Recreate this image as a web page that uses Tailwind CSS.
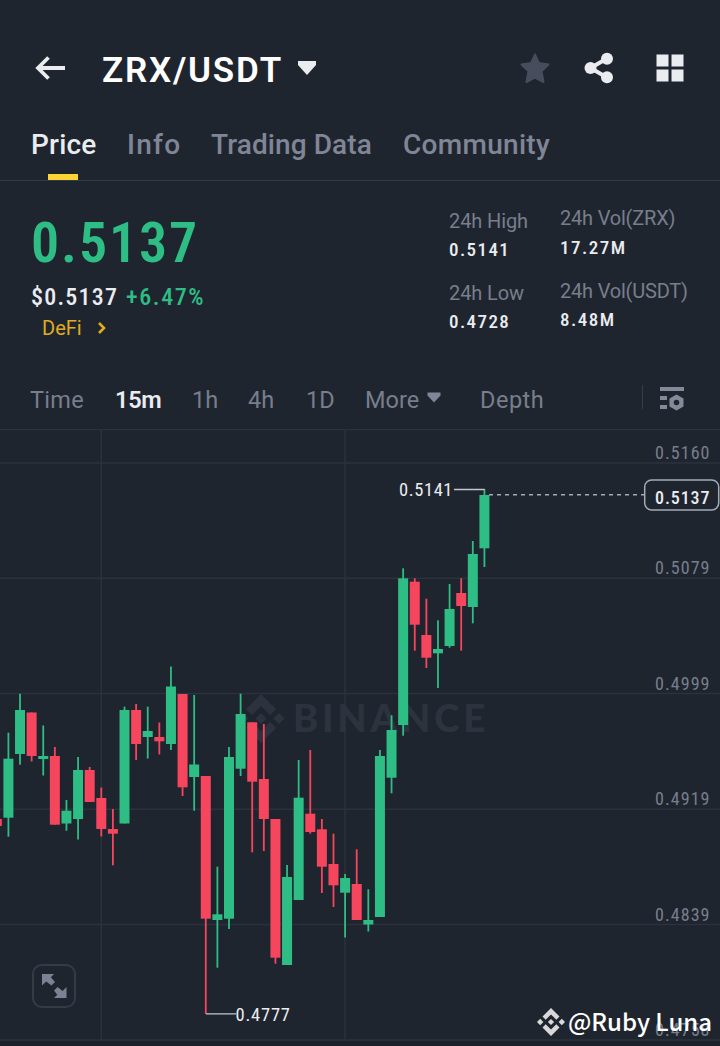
<!DOCTYPE html>
<html lang="en">
<head>
    <meta charset="UTF-8">
    <meta name="viewport" content="width=device-width, initial-scale=1.0">
    <title>ZRX/USDT</title>
    <script src="https://cdn.jsdelivr.net/npm/@tailwindcss/browser@4"></script>
</head>
<body class="bg-[#1f252f] text-[#eaecef] font-['Roboto',sans-serif]">
    <div class="relative w-[720px] h-[1046px] overflow-hidden whitespace-nowrap">

        <!-- Header -->
        <header class="flex items-center h-[136px] pl-[34px] pr-[36px]">
            <svg class="w-8 h-6" viewBox="0 0 32 24" fill="none" stroke="#eaecef" stroke-width="3.8">
                <path d="M31 12H4M14.500 1.500L4 12l10.500 10.500"/>
            </svg>
            <h1 class="ml-[36px] mt-[5px] w-[179px] text-[35px] leading-10 font-semibold tracking-[1.8px] text-white">ZRX/USDT</h1>
            <svg class="ml-[16px] w-5 h-4" viewBox="0 0 20 16" fill="#eaecef">
                <path d="M1 1h18v4l-9 10L1 5z"/>
            </svg>
            <div class="ml-auto flex items-center">
                <svg class="w-8 h-8" viewBox="0 0 32 32" fill="#474d5c" stroke="#474d5c" stroke-width="2" stroke-linejoin="round">
                    <path d="M17 2.500l3.900 8.600 9.600 1.400-7 6.700 2 10.800-8.500-4.500-8.500 4.500 2-10.800-7-6.700 9.600-1.400z"/>
                </svg>
                <svg class="ml-[33px] w-8 h-8" viewBox="0 0 32 32" fill="#eaecef">
                    <path d="M7.500 16L24 6.500M7.500 16l16.500 9.500" stroke="#eaecef" stroke-width="4"/>
                    <circle cx="7.500" cy="16" r="6"/>
                    <circle cx="24" cy="6.700" r="6"/>
                    <circle cx="24" cy="25.300" r="6"/>
                </svg>
                <svg class="ml-[41px] w-7 h-7" viewBox="0 0 28 28" fill="#eaecef">
                    <path d="M.500.500h12v12h-12zM15.500.500h12v12h-12zM.500 15.500h12v12h-12zM15.500 15.500h12v12h-12z"/>
                </svg>
            </div>
        </header>

        <!-- Tabs -->
        <nav class="relative flex h-[45px] pl-[31px] border-b border-[#333b47] text-[28px] leading-[18px] font-medium text-[#808695]">
            <div class="w-[96px] tracking-[0.2px] text-[#eaecef]">Price</div>
            <div class="w-[84px] tracking-[1.3px]">Info</div>
            <div class="w-[192px] tracking-[0.1px]">Trading Data</div>
            <div class="tracking-[0.3px]">Community</div>
            <div class="absolute left-[48px] bottom-0 w-[30px] h-[6px] bg-[#fcd535]"></div>
        </nav>

        <!-- Price summary -->
        <section class="flex h-[188px] pl-[31px]">
            <div class="w-[418px] pt-[32px]">
                <div class="text-[56px] leading-[60px] font-semibold [font-stretch:75%] tracking-[1.9px] text-[#2ebd85]">0.5137</div>
                <div class="mt-[9px] flex text-[24px] leading-[30px] font-medium [font-stretch:75%]">
                    <span class="w-[95px] tracking-[1.2px]">$0.5137</span>
                    <span class="tracking-[1.6px] text-[#2ebd85]">+6.47%</span>
                </div>
                <div class="flex items-center pl-[11px] text-[20px] leading-[32px] text-[#e0ac20]">
                    <span class="w-[55px]">DeFi</span>
                    <svg width="10" height="12" viewBox="0 0 10 12" fill="none" stroke="#e0ac20" stroke-width="2.600">
                        <path d="M2 1l5 5-5 5"/>
                    </svg>
                </div>
            </div>
            <dl class="w-[111px] pt-[26px] text-[20px] leading-7 tracking-[-0.1px]">
                <dt class="text-[#787e8c]">24h High</dt>
                <dd class="mt-px text-[19px] font-medium [font-stretch:75%] tracking-[1.4px]">0.5141</dd>
                <dt class="mt-[15px] text-[#787e8c]">24h Low</dt>
                <dd class="mt-px text-[19px] font-medium [font-stretch:75%] tracking-[1.4px]">0.4728</dd>
            </dl>
            <dl class="pt-[23px] text-[20px] leading-7 tracking-[-0.2px]">
                <dt class="text-[#787e8c]">24h Vol(ZRX)</dt>
                <dd class="mt-[2px] text-[19px] font-medium [font-stretch:75%] tracking-[1.5px]">17.27M</dd>
                <dt class="mt-[15px] text-[#787e8c]">24h Vol(USDT)</dt>
                <dd class="mt-px text-[19px] font-medium [font-stretch:75%] tracking-[1.5px]">8.48M</dd>
            </dl>
        </section>

        <!-- Intervals -->
        <nav class="flex items-center h-[60px] pl-[30px] text-[23.500px] text-[#787e8c]">
            <div class="mt-[3px] w-[85px] tracking-[0.3px]">Time</div>
            <div class="mt-[3px] w-[77px] font-semibold tracking-[-0.3px] text-[#eaecef]">15m</div>
            <div class="mt-[3px] w-[56px]">1h</div>
            <div class="mt-[3px] w-[58px]">4h</div>
            <div class="mt-[3px] w-[59px]">1D</div>
            <div class="mt-[3px] w-[62px]">More</div>
            <svg class="w-[14px] h-[11px] -mt-1" viewBox="0 0 14 11" fill="#808695">
                <path d="M.500.500h13v3L7 10.500.500 3.500z"/>
            </svg>
            <div class="mt-[3px] ml-[39px] w-[162px] tracking-[0.5px]">Depth</div>
            <div class="w-px h-6 -mt-1 bg-[#363d49]"></div>
            <svg class="ml-[17px] w-6 h-6" viewBox="0 0 24 24" fill="#848a99">
                <path d="M0 0h24v4H0zM0 9h7v4H0zM0 18h7v4H0z"/>
                <path fill-rule="evenodd" d="M16.500 7.500l7 4v8l-7 4-7-4v-8zM16.500 12.700a2.800 2.800 0 1 0 0 5.600a2.800 2.800 0 1 0 0-5.600z"/>
            </svg>
        </nav>

        <!-- Chart -->
        <svg class="block" width="720" height="617" viewBox="0 429 720 617">
            <rect x="0" y="1041" width="720" height="5" fill="#1b202a"/>
            <g stroke="#2b323d" stroke-width="1.500">
                <path d="M0 429.500H720M0 463H720M0 578.300H720M0 693.600H720M0 809.200H720M0 924.500H720M0 1040H720"/>
                <path d="M101.300 429V1040M345 429V1040"/>
            </g>
            <g fill="#2d333e">
                <path d="M261 694l15 15-6 6-9-9-9 9-6-6zM261 713l5.500 5.500-5.500 5.500-5.500-5.500zM279 713l5.500 5.500-5.500 5.500-5.500-5.500zM243 713l5.500 5.500-5.500 5.500-5.500-5.500zM261 743l15-15-6-6-9 9-9-9-6 6z"/>
                <text x="293" y="732" font-family="Lato" font-weight="900" font-size="38" textLength="192">BINANCE</text>
            </g>
            <g id="candles"></g>
            <path d="M454 489.500h30.500M206 1013.800h30" stroke="#c3c7cd" stroke-width="1.300" fill="none"/>
            <path d="M489 494.800H644" stroke="#a5abb4" stroke-width="1.600" stroke-dasharray="4 4"/>
            <g class="[font-stretch:75%]" fill="#eaecef" font-size="18.500">
                <text x="399" y="496" textLength="53.500">0.5141</text>
                <text x="235.500" y="1021" textLength="54.500">0.4777</text>
            </g>
            <g class="[font-stretch:75%]" fill="#787e8c" font-size="18">
                <text x="655" y="459" textLength="54.500">0.5160</text>
                <text x="655" y="574" textLength="54.500">0.5079</text>
                <text x="655" y="690" textLength="54.500">0.4999</text>
                <text x="655" y="805" textLength="54.500">0.4919</text>
                <text x="655" y="921" textLength="54.500">0.4839</text>
                <text x="655" y="1036" textLength="54.500">0.4758</text>
            </g>
            <rect x="644.700" y="480" width="74" height="30" rx="7" fill="#1f252f" stroke="#a5abb4" stroke-width="1.500"/>
            <text class="[font-stretch:75%]" x="655" y="504" textLength="54.500" font-size="18" font-weight="500" fill="#eaecef">0.5137</text>
        </svg>

        <!-- Fullscreen button -->
        <button class="absolute left-[32px] top-[964px] w-11 h-11 rounded-[10px] border-2 border-[#343b47] flex items-center justify-center">
            <svg class="w-[26px] h-[26px]" viewBox="0 0 26 26" fill="#7c8294">
                <path d="M1 1h12L9.800 4.200l4.200 4.800-3.600 3.600-5.200-4L1 12.500zM25.500 25H13l3.300-3.300-3.300-4.200 3.600-3.600 5 4 3.900-3.900z"/>
            </svg>
        </button>

        <!-- Author tag -->
        <div class="absolute left-[537px] top-[1004px] flex items-center h-9 text-white font-['Noto_Sans_CJK_SC',sans-serif]">
            <svg class="w-7 h-7" viewBox="0 0 28 28" fill="#d9d9d9">
                <path d="M14 0l8.500 8.500-3.200 3.200L14 6.400l-5.300 5.300-3.200-3.200zM14 28l8.500-8.500-3.200-3.200L14 21.600l-5.300-5.300-3.200 3.200zM14 10.900l3.100 3.100-3.100 3.100-3.100-3.100zM3.200 10.800L6.400 14l-3.200 3.200L0 14zM24.800 10.800L28 14l-3.200 3.200-3.200-3.200z"/>
            </svg>
            <span class="ml-[3px] -mt-[2px] text-[24px] leading-9 font-medium">@Ruby Luna</span>
        </div>
    </div>

    <script>
        const UP = '#2ebd85';
        const DOWN = '#f6465d';
        const STEP = 11.61;

        // [color, body top, body bottom, wick top, wick bottom]
        const candles = [
            [DOWN, 819, 826, 819, 826],
            [UP, 758.7, 817.7, 732.7, 836.7],
            [UP, 710, 754, 693.7, 764.7],
            [DOWN, 712.5, 756, 712.5, 761.5],
            [UP, 756, 759, 725.5, 775.5],
            [DOWN, 756, 824.7, 747, 824.7],
            [UP, 810.7, 823.5, 800, 830.7],
            [UP, 770, 819, 757, 839.5],
            [DOWN, 770, 802, 767, 802],
            [DOWN, 798, 829, 787.5, 836.5],
            [DOWN, 829, 833.7, 809, 865.3],
            [UP, 710, 823.5, 706.7, 823.5],
            [DOWN, 710, 744, 704, 760],
            [UP, 731, 737, 706.7, 758.5],
            [DOWN, 737, 741.3, 722.5, 754.5],
            [UP, 686.5, 744, 666.5, 750],
            [DOWN, 694, 787.3, 694, 796],
            [UP, 764.5, 777, 695, 810.7],
            [DOWN, 776, 918.7, 776, 1014],
            [UP, 914.3, 920, 866.7, 967.7],
            [UP, 757, 918.7, 747, 929],
            [UP, 714, 768.7, 693.7, 776],
            [DOWN, 722.3, 781.7, 722.3, 852.3],
            [DOWN, 779, 819, 724, 851],
            [DOWN, 819, 957.7, 819, 963.7],
            [UP, 877, 965, 865, 965],
            [UP, 797.7, 900, 760, 900],
            [DOWN, 813.7, 832, 750, 833.7],
            [DOWN, 829.3, 866.7, 819, 893],
            [DOWN, 864, 885.3, 833.7, 907],
            [UP, 878, 892.7, 874, 937.5],
            [DOWN, 884, 920, 849.3, 920],
            [UP, 920, 924.5, 889.3, 931.5],
            [UP, 756, 917, 750, 917],
            [UP, 730, 777.7, 715.3, 793.3],
            [UP, 578.3, 725, 568.3, 735.7],
            [DOWN, 581.7, 624.7, 578.3, 650.7],
            [DOWN, 635, 657.7, 598.7, 668],
            [UP, 649, 653.3, 620.3, 688],
            [UP, 609, 646, 584, 647.7],
            [DOWN, 593, 606, 578.3, 650.7],
            [UP, 554, 607, 541, 623.3],
            [UP, 495, 548.3, 489, 567]
        ];

        const group = document.getElementById('candles');

        function addRect(x, y, width, height, fill) {
            const rect = document.createElementNS('http://www.w3.org/2000/svg', 'rect');
            rect.setAttribute('x', x);
            rect.setAttribute('y', y);
            rect.setAttribute('width', width);
            rect.setAttribute('height', height);
            rect.setAttribute('fill', fill);
            group.appendChild(rect);
        }

        candles.forEach(([color, top, bottom, high, low], i) => {
            const x = -3.2 + i * STEP;
            addRect(x - 0.9, high, 1.8, low - high, color);
            addRect(x - 5, top, 10, bottom - top, color);
        });
    </script>
</body>
</html>
